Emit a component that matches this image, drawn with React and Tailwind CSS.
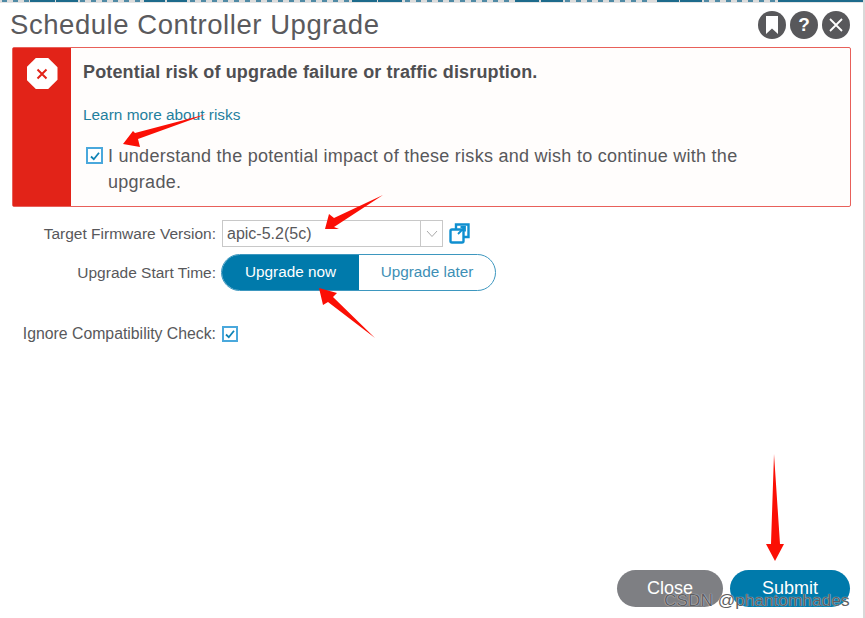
import React from 'react';

const font = { fontFamily: '"Liberation Sans", Arial, sans-serif' };

// red hand-drawn arrows sit on top of the dialog, so they are absolute
const arrows = [
  'M207 114 L138 139 L140 147 L123 144 L133 131 L135 133 Z',
  'M383 195 L334 227 L339 229 L325 229 L329 214 L334 218 Z',
  'M375 338 L328 302 L323 305 L319 288 L337 293 L333 297 Z',
  'M774 454 L780 544 L784 544 L775 561 L766 544 L771 544 Z',
];

// [start, width] of the long dark pieces left over from the page behind the dialog
const stripPieces = [
  [30, 25], [56, 22], [144, 21], [167, 20], [352, 25], [378, 24],
  [515, 24], [541, 22], [657, 22], [680, 22], [778, 87],
];

// the gaps between them hold short broken-up bits of text
const stripGaps = [[2, 30], [80, 144], [190, 352], [405, 515], [565, 657], [704, 778]];
const stripBits = stripGaps.flatMap(([from, to]) => {
  const bits = [];
  for (let x = from; x < to - 4; x += 11) bits.push(x);
  return bits;
});

const Check = ({ className }) => (
  <span className={`flex items-center justify-center w-4 h-4 border-2 border-[#4aa8dc] bg-white shrink-0 ${className || ''}`}>
    <svg width="12" height="12" viewBox="0 0 12 12" fill="none">
      <path d="M2 6.5 L4.8 9.2 L10 2.8" stroke="#0f83b5" strokeWidth="1.8" />
    </svg>
  </span>
);

export default function App() {
  return (
    <div className="relative w-[865px] h-[618px] overflow-hidden bg-white flex flex-col text-[#58585b] border-r-2 border-[#d9d9d9]" style={font}>
      <div className="relative h-[3px] shrink-0 border-b border-[#e4e4e4] bg-[#dcdcdc]">
        {stripBits.map((x) => (
          <span key={x} className="absolute top-0 h-[2px] w-[5px] bg-[#4f8aa5]" style={{ left: x }} />
        ))}
        {stripPieces.map(([x, w]) => (
          <span key={x} className="absolute top-0 h-[2px] bg-[#1d6b8c]" style={{ left: x, width: w }} />
        ))}
      </div>

      <div className="flex items-center justify-between h-[45px] pl-[10px] pr-[13px] shrink-0">
        <h1 className="text-[27.5px] leading-none tracking-[0.55px] font-normal text-[#5a5a5d] -mt-[2px]">Schedule Controller Upgrade</h1>
        <div className="flex items-center gap-[4px] -mt-[2px]">
          <span className="flex items-center justify-center w-7 h-7 rounded-full bg-[#58585b]">
            <svg width="14" height="20" viewBox="0 0 14 20"><path d="M1 1 H13 V19 L7 13.5 L1 19 Z" fill="#fff" /></svg>
          </span>
          <span className="flex items-center justify-center w-7 h-7 rounded-full bg-[#58585b] text-white font-bold text-[19px] leading-none">?</span>
          <span className="flex items-center justify-center w-7 h-7 rounded-full bg-[#58585b]">
            <svg width="16" height="16" viewBox="0 0 16 16"><path d="M2 2 L14 14 M14 2 L2 14" stroke="#fff" strokeWidth="1.8" /></svg>
          </span>
        </div>
      </div>

      <div className="flex h-[160px] -mt-[1px] ml-3 mr-[12px] border border-[#e8605a] rounded-[2px] bg-[#fffdfc] shrink-0">
        <div className="w-[58px] bg-[#e22318] flex justify-center pt-[10px] shrink-0">
          <span className="w-[31px] h-[31px] bg-white flex items-center justify-center [clip-path:polygon(30%_0,70%_0,100%_30%,100%_70%,70%_100%,30%_100%,0_70%,0_30%)]">
            <svg width="12" height="12" viewBox="0 0 12 12"><path d="M1.5 1.5 L10.5 10.5 M10.5 1.5 L1.5 10.5" stroke="#e22318" strokeWidth="2" /></svg>
          </span>
        </div>
        <div className="flex-1 pl-3 pr-[90px] pt-[13px]">
          <div className="font-bold text-[18px] tracking-[0.15px] leading-[22px] text-[#4f4f52]">Potential risk of upgrade failure or traffic disruption.</div>
          <div className="mt-[22px] text-[15.4px] leading-5 text-[#1f7f9e]">Learn more about risks</div>
          <div className="flex gap-[5px] mt-[18px] ml-[3px]">
            <Check className="mt-[4px] w-[17px] h-[17px]" />
            <span className="text-[18px] tracking-[0.27px] leading-[26px]">I understand the potential impact of these risks and wish to continue with the upgrade.</span>
          </div>
        </div>
      </div>

      <div className="flex items-center mt-[13px] h-[27px] shrink-0">
        <span className="w-[216px] text-right text-[15.5px]">Target Firmware Version:</span>
        <div className="flex items-center ml-[6px]">
          <span className="w-[199px] h-[27px] border border-[#c8c8c8] pl-1 text-[16px] leading-[25px]">apic-5.2(5c)</span>
          <span className="w-[22px] h-[27px] border border-l-0 border-[#c8c8c8] flex items-center justify-center">
            <svg width="12" height="8" viewBox="0 0 12 8" fill="none"><path d="M1 1 L6 6.5 L11 1" stroke="#aaa" /></svg>
          </span>
        </div>
        <svg className="ml-[6px]" width="21" height="21" viewBox="0 0 21 21" fill="none" stroke="#0f8fd0" strokeWidth="2.4">
          <path d="M7 6 V1.5 H19.5 V14 H15" />
          <rect x="1.5" y="6.5" width="13" height="13" rx="1.5" />
          <path d="M9 11 L16 4 M11.5 4 H16 V8.5" strokeWidth="1.8" />
        </svg>
      </div>

      <div className="flex items-center mt-[7px] h-[37px] shrink-0">
        <span className="w-[216px] text-right text-[15.5px]">Upgrade Start Time:</span>
        <div className="flex ml-[5px] w-[275px] h-[37px] rounded-full border border-[#3d97bf] overflow-hidden text-[15.3px]">
          <span className="w-[137px] bg-[#007aab] text-white flex items-center justify-center">Upgrade now</span>
          <span className="flex-1 text-[#3d8fb5] flex items-center justify-center">Upgrade later</span>
        </div>
      </div>

      <div className="flex items-center mt-[34px] h-[18px] shrink-0">
        <span className="w-[216px] text-right text-[15.8px]">Ignore Compatibility Check:</span>
        <Check className="ml-[6px]" />
      </div>

      <div className="flex-1" />

      <div className="flex justify-end gap-[7px] pr-[13px] pb-[11px] shrink-0">
        <button className="w-[106px] h-[37px] rounded-full bg-[#7e7f83] text-white text-[18px]">Close</button>
        <button className="w-[120px] h-[37px] rounded-full bg-[#007aab] text-white text-[18px]">Submit</button>
      </div>

      <svg className="absolute inset-0 pointer-events-none" width="865" height="618">
        {arrows.map((d) => <path key={d} d={d} fill="#fb0f05" />)}
      </svg>
      <span className="absolute left-[664px] top-[590px] text-[17.3px] leading-5 text-[#5f5f62] [text-shadow:0_0_1px_#fff]">CSDN @phantomhades</span>
    </div>
  );
}
